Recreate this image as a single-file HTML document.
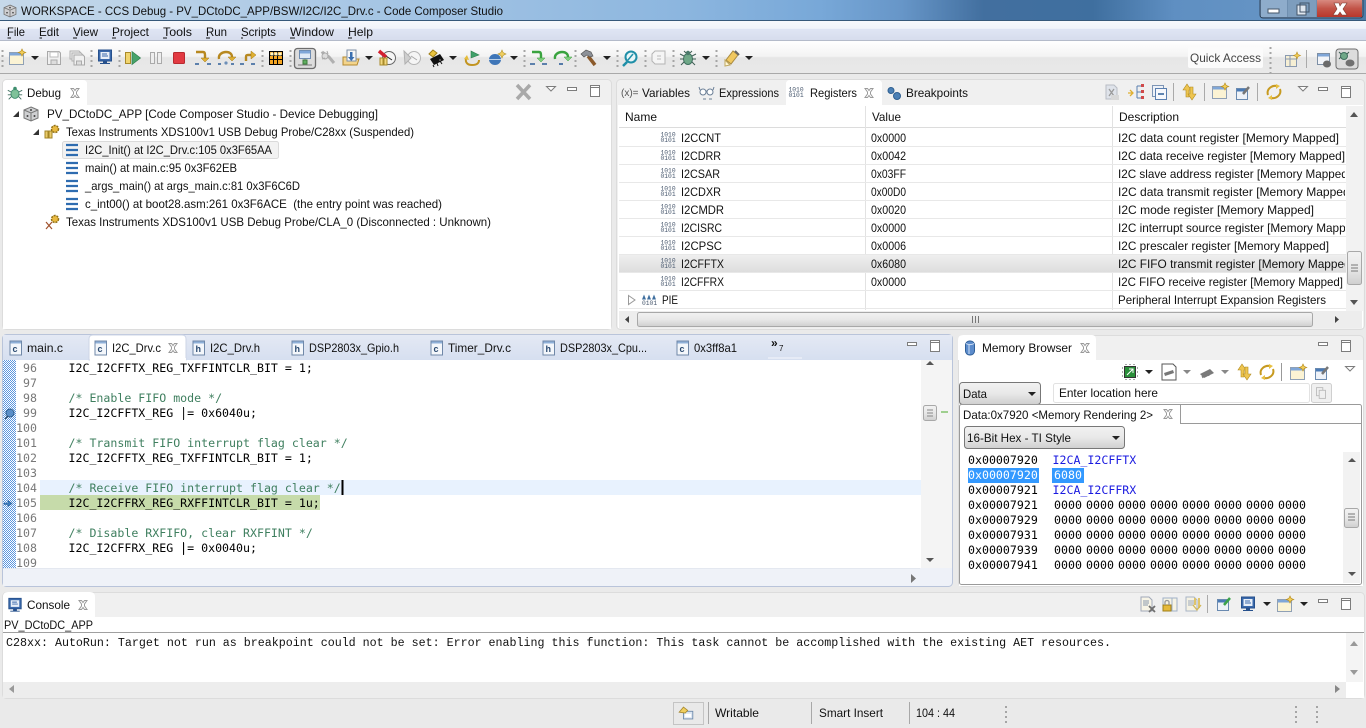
<!DOCTYPE html>
<html><head><meta charset="utf-8"><title>Code Composer Studio</title>
<style>
html,body{margin:0;padding:0;width:1366px;height:728px;overflow:hidden;background:#eaeaea}
svg{display:block}
text{font-family:"Liberation Sans",sans-serif;font-size:12px;fill:#111}
.m{font-family:"DejaVu Sans Mono",monospace;font-size:11.6px;fill:#000}
.c{fill:#3f7f5f}
.n{fill:#787878;text-anchor:end}
.b{fill:#1a1ae0}
.w{fill:#fff}
.k{font-family:"Liberation Mono",monospace;font-size:11.67px}
.bin{font-family:"Liberation Mono",monospace;font-size:6.3px;fill:#46566c}
.fi{font-family:"Liberation Sans",sans-serif;font-size:9px;font-weight:bold;fill:#2a4a70}
</style></head><body>
<svg xmlns="http://www.w3.org/2000/svg" width="1366" height="728" viewBox="0 0 1366 728">
<defs>
<linearGradient id="title" x1="0" x2="1" y1="0" y2="0">
<stop offset="0" stop-color="#c6d9ea"/><stop offset=".2" stop-color="#afcbe6"/><stop offset=".5" stop-color="#8cb6df"/><stop offset=".6" stop-color="#78a8d8"/><stop offset=".66" stop-color="#6796c8"/><stop offset=".72" stop-color="#426f9f"/><stop offset=".8" stop-color="#3f6f9f"/><stop offset=".86" stop-color="#5f8fc2"/><stop offset=".93" stop-color="#6594c4"/><stop offset="1" stop-color="#4d7ca8"/>
</linearGradient>
<linearGradient id="menu" x1="0" x2="0" y1="0" y2="1"><stop offset="0" stop-color="#f6f8fc"/><stop offset=".38" stop-color="#f0f3fa"/><stop offset=".4" stop-color="#dfe5f4"/><stop offset="1" stop-color="#d6dcec"/></linearGradient>
<linearGradient id="tool" x1="0" x2="0" y1="0" y2="1"><stop offset="0" stop-color="#fff"/><stop offset=".48" stop-color="#f3f3f3"/><stop offset=".52" stop-color="#e6e6e6"/><stop offset="1" stop-color="#e9e9e9"/></linearGradient>
<linearGradient id="tabbar" x1="0" x2="0" y1="0" y2="1"><stop offset="0" stop-color="#e4e9f4"/><stop offset="1" stop-color="#d6dff0"/></linearGradient>
<linearGradient id="sel" x1="0" x2="0" y1="0" y2="1"><stop offset="0" stop-color="#efefef"/><stop offset="1" stop-color="#dcdcdc"/></linearGradient>
<linearGradient id="btn" x1="0" x2="0" y1="0" y2="1"><stop offset="0" stop-color="#f2f2f2"/><stop offset=".5" stop-color="#e8e8e8"/><stop offset="1" stop-color="#cfcfcf"/></linearGradient>
<linearGradient id="close" x1="0" x2="0" y1="0" y2="1"><stop offset="0" stop-color="#d88a80"/><stop offset=".5" stop-color="#c25448"/><stop offset="1" stop-color="#b8372c"/></linearGradient>
<pattern id="chk" width="2" height="2" patternUnits="userSpaceOnUse"><rect width="2" height="2" fill="#fff"/><rect width="1" height="1" fill="#5b96df"/><rect x="1" y="1" width="1" height="1" fill="#5b96df"/></pattern>
<clipPath id="descclip"><rect x="1114" y="128" width="231" height="182"/></clipPath>

<g id="drop"><path d="M-4-2H4L0 2Z" fill="#222"/></g>
<g id="dropg"><path d="M-4-2H4L0 2Z" fill="#888"/></g>
<g id="x"><path d="M-4-4.5-1.5-4.5 0-2.5 1.5-4.5 4-4.5 1.5-1 1.5 1 4 4.5 1.5 4.5 0 2.5-1.5 4.5-4 4.5-1.5 1-1.5-1Z" fill="#fff" stroke="#9a9a9a"/></g>
<g id="menuv"><path d="M-4.5-2.5H4.5L0 2Z" fill="#fff" stroke="#7d7d7d"/></g>
<g id="min"><rect x="-4.5" y="-1.5" width="9" height="3" fill="#fff" stroke="#7d7d7d"/></g>
<g id="max"><rect x="-4.5" y="-5.5" width="9" height="11" fill="#fff" stroke="#7d7d7d"/><path d="M-4.5-3.5H4.5" stroke="#7d7d7d"/></g>
<g id="new"><rect x="-7.5" y="-5.5" width="14" height="12" fill="#fbf3d4" stroke="#8fa0b5"/><rect x="-7" y="-5" width="13" height="2.5" fill="#7fa6d8"/><path d="M5-9 6.2-6.5 8.7-5.5 6.2-4.5 5-2 3.8-4.5 1.3-5.5 3.8-6.5Z" fill="#f3cf58" stroke="#b98f20" stroke-width=".7"/></g>
<g id="save"><path d="M-6.5-6.5H5L6.5-5V6.5H-6.5Z" fill="#f0f0f0" stroke="#a8a8a8"/><rect x="-4" y="-6" width="8" height="5" fill="#fff" stroke="#bbb"/><rect x="-3" y="2" width="6" height="4.5" fill="#ddd" stroke="#aaa"/></g>
<g id="saveall"><path d="M-7-7H2L4-5V1H-7Z" fill="#efefef" stroke="#b0b0b0"/><path d="M-5-5H4L6-3V3H-5Z" fill="#efefef" stroke="#b0b0b0"/><path d="M-3-3H6L7.5-1.5V7H-3Z" fill="#f0f0f0" stroke="#a8a8a8"/><rect x="-.5" y="3" width="5" height="4" fill="#ddd" stroke="#aaa"/></g>
<g id="console"><rect x="-6.5" y="-7" width="13" height="11" fill="#3a69ab" stroke="#26508c"/><rect x="-4.5" y="-5" width="9" height="7" fill="#e8eff8"/><path d="M-3-3H2M-3-1H3" stroke="#3a69ab"/><path d="M-2 4H2V6H5V7H-5V6H-2Z" fill="#26508c"/></g>
<g id="resume"><rect x="-7.5" y="-5.5" width="5" height="11" fill="#f1d570" stroke="#a98a2a"/><path d="M-1-6.5 7.5 0-1 6.5Z" fill="#47a36a" stroke="#2f7f4d" stroke-width=".7"/></g>
<g id="suspend"><rect x="-5.5" y="-5.5" width="4" height="11" fill="#eee" stroke="#aaa"/><rect x="1.5" y="-5.5" width="4" height="11" fill="#eee" stroke="#aaa"/></g>
<g id="stop"><rect x="-5.5" y="-5.5" width="11" height="11" rx="1" fill="#e23a42" stroke="#b82a30"/></g>
<g id="into"><path d="M-6-6H1C3-6 3-4 3-3V1" fill="none" stroke="#b7881f" stroke-width="2.4"/><path d="M-1 0H7L3 4Z" fill="#e0b030" stroke="#a07818" stroke-width=".5"/><path d="M-7 6H-3M5 6H9" stroke="#2f5f98" stroke-width="1.6"/></g>
<g id="over"><path d="M-7 1C-8-4-3-6 0-6 4-6 6-4 6-1" fill="none" stroke="#b7881f" stroke-width="2.4"/><path d="M2-1H10L6 3Z" fill="#e0b030" stroke="#a07818" stroke-width=".5"/><path d="M-8 6H-5M5 6H8" stroke="#2f5f98" stroke-width="1.6"/><circle cx="0" cy="5" r="1.6" fill="#6d8fb8"/></g>
<g id="ret"><path d="M-2 3V-1C-2-3-1-3 0-3H4" fill="none" stroke="#b7881f" stroke-width="2.4"/><path d="M3-7 8-3 3 1Z" fill="#e0b030" stroke="#a07818" stroke-width=".5"/><path d="M-8 6H-4M3 6H7" stroke="#2f5f98" stroke-width="1.6"/></g>
<g id="grid"><rect x="-6.5" y="-6.5" width="13" height="13" fill="#f5a623" stroke="#000"/><path d="M-2.5-6.5V6.5M1.500-6.500V6.500M-6.500-2.500H6.500M-6.500 1.500H6.500" stroke="#000"/><rect x="-5.500" y="-5.500" width="3" height="3" fill="#fff7c8"/><rect x="-1.500" y="-5.500" width="3" height="3" fill="#fff7c8"/><rect x="2.500" y="-5.500" width="3" height="3" fill="#fff7c8"/></g>
<g id="pressed"><rect x="-5.500" y="-7.500" width="11" height="8" fill="#dfe9f5" stroke="#6f8db2"/><rect x="-5" y="-7" width="10" height="2.500" fill="#7fa6d8"/><rect x="-2" y="2" width="4" height="4" fill="#5fae5f" stroke="#3c7c3c"/><path d="M0 .500V2M-7 7H7" stroke="#7d7d7d"/></g>
<g id="bugtag"><path d="M-6-6 1-1 6 5" stroke="#b0b0b0" stroke-width="3" fill="none"/><circle cx="-3" cy="-2" r="3" fill="#ddd" stroke="#aaa"/><path d="M-7-6-4-4M-6 1-3 0M-1-7 0-4" stroke="#aaa"/></g>
<g id="loadprog"><path d="M-8 7V-1H-4L-3 1H8L6 7Z" fill="#f3d48c" stroke="#b58a30"/><rect x="-4" y="-8" width="9" height="11" fill="#f7f7f7" stroke="#7d8fa5"/><path d="M-1-6H1.500V-1H3.500L.3 3-3-1H-1Z" fill="#3a6fb0"/></g>
<g id="bpclock"><circle cx="2" cy="0" r="6.500" fill="#f5f5f5" stroke="#666"/><path d="M2 0-1-2M2 0 5 2" stroke="#222"/><path d="M-8-7-1-1" stroke="#d3202f" stroke-width="3.500"/><rect x="-7" y="0" width="3" height="7" fill="#f2d880" stroke="#a88a2a"/><rect x="-3" y="0" width="3" height="7" fill="#f2d880" stroke="#a88a2a"/></g>
<g id="bpclockg"><circle cx="2" cy="0" r="6.500" fill="#f5f5f5" stroke="#b5b5b5"/><path d="M2 0-1-2M2 0 5 2" stroke="#aaa"/><path d="M-8-7-1 0-7 6Z" fill="#cfcfcf" stroke="#b0b0b0"/></g>
<g id="chip"><path d="M-3-8-7-4-3-1 1-5Z" fill="#e9c43f" stroke="#a07f18"/><path d="M-6 1 4-4 8 2-2 7Z" fill="#111"/><path d="M-3 7-2 9M1 5 2 8M4 3 6 6" stroke="#111"/><circle cx="4" cy="2" r="1" fill="#666"/></g>
<g id="restart"><path d="M-2-2V-7L6-3-2 0Z" fill="#3fa06a" stroke="#2f7f4d" stroke-width=".6"/><path d="M-7 0C-8 5-5 7-1 7 3 7 6 6 6 2" fill="none" stroke="#c29420" stroke-width="2"/><path d="M-9 1-6-3-4 2Z" fill="#e5bd3b"/></g>
<g id="ball"><ellipse cx="-1" cy="1.500" rx="6" ry="5.500" fill="#3f76b8"/><path d="M-7 1.500H5" stroke="#bcd2ea"/><path d="M6-8 7.200-5.300 10-4 7.200-2.700 6 0 4.800-2.700 2-4 4.800-5.300Z" fill="#f0cf60" stroke="#b09028" stroke-width=".6"/></g>
<g id="gsi"><path d="M-6-6H1C3-6 3-4 3-3V1" fill="none" stroke="#39a33f" stroke-width="2.400"/><path d="M-1 0H7L3 4Z" fill="#7ed07e" stroke="#3d9e3d" stroke-width=".5"/><path d="M-8 6H-3M4 6H9" stroke="#2f5f98" stroke-width="1.600"/></g>
<g id="gso"><path d="M-7 1C-8-4-3-6 0-6 4-6 6-4 6-1" fill="none" stroke="#39a33f" stroke-width="2.400"/><path d="M2-1H10L6 3Z" fill="#7ed07e" stroke="#3d9e3d" stroke-width=".5"/><path d="M-3 6H1" stroke="#2f5f98" stroke-width="1.600"/></g>
<g id="hammer"><path d="M-1-2 6 7" stroke="#8b5a2b" stroke-width="3.500"/><path d="M-8-4-3-8 2-6 4-2 1-1-2-3-5-1Z" fill="#8d9198" stroke="#555" stroke-width=".7"/></g>
<g id="search"><circle cx="1" cy="-1" r="5.500" fill="#e8f6f8" stroke="#1f8fa8" stroke-width="2"/><path d="M-2 2 3-4" stroke="#1f8fa8" stroke-width="1.500"/><path d="M-3 4-7 8" stroke="#1f8fa8" stroke-width="2.500"/></g>
<g id="tags"><path d="M-6-4-3-7H7V6H-3L-6 3Z" fill="#f5f5f5" stroke="#b4b4b4"/><path d="M-1-2H3M-1 1H3" stroke="#bbb"/></g>
<g id="bug"><ellipse cx="0" cy="1" rx="4.500" ry="5.500" fill="#6fa888" stroke="#3f6f5f"/><circle cx="0" cy="-5" r="2.200" fill="#4a7a6a"/><path d="M-8-4-4-2M8-4 4-2M-8 1H-4M8 1H4M-7 7-4 4M7 7 4 4" stroke="#3f5f55"/><path d="M-4-7-2-5M4-7 2-5" stroke="#3f5f55"/></g>
<g id="flash"><path d="M-6 2 1-7 6-3-1 6Z" fill="#f0c860" stroke="#a88a40"/><path d="M-7 2-2 7-7 8Z" fill="#fff8d8" stroke="#c0a860"/><path d="M3-7 7-3" stroke="#666" stroke-width="2"/></g>
<g id="persp"><rect x="-6.500" y="-4.500" width="11" height="11" fill="#f6efd4" stroke="#8a9ab0"/><path d="M-6-1H4M-2-4V6" stroke="#8a9ab0"/><path d="M5-8 6-5.500 8.500-4.500 6-3.500 5-1 4-3.500 1.500-4.500 4-5.500Z" fill="#f3cf58" stroke="#b98f20" stroke-width=".6"/></g>
<g id="cwin"><rect x="-6.500" y="-6.500" width="12" height="11" fill="#f2f4f8" stroke="#7d8fa5"/><rect x="-6" y="-6" width="11" height="2.500" fill="#7fa6d8"/><ellipse cx="3" cy="4" rx="4" ry="3.500" fill="#6a6a6a"/></g>
<g id="debugp"><circle cx="-3" cy="-3" r="3.500" fill="#6fa888" stroke="#3f6f5f"/><path d="M-8-7-6-5M2-7 0-5M-8 0-6-2" stroke="#3f5f55"/><ellipse cx="3" cy="4" rx="4.500" ry="3.500" fill="#707070"/></g>
<g id="root"><path d="M0-7 7-4V4L0 7-7 4V-4Z" fill="#cfd0d2" stroke="#777"/><path d="M-7-4 0-1 7-4M0-1V7" stroke="#777" fill="none"/><circle cx="-3.500" cy="2" r="1" fill="#444"/><circle cx="3.500" cy="2" r="1" fill="#444"/><circle cx="0" cy="-4" r="1" fill="#444"/></g>
<g id="gear"><rect x="-8" y="-1" width="3" height="7" fill="#eacb6a" stroke="#a38525"/><rect x="-4" y="-1" width="3" height="7" fill="#eacb6a" stroke="#a38525"/><circle cx="2" cy="-3" r="3.500" fill="#e8b941" stroke="#8f6f16" stroke-width="1.500" stroke-dasharray="2 1"/></g>
<g id="gearx"><circle cx="2" cy="-3" r="3.500" fill="#e8b941" stroke="#8f6f16" stroke-width="1.500" stroke-dasharray="2 1"/><path d="M-7 0-1 7M-1 0-7 7" stroke="#a0522d" stroke-width="1.200"/></g>
<g id="stack"><path d="M-6-5H6M-6 0H6M-6 5H6" stroke="#2e6cb0" stroke-width="2.200"/></g>
<g id="debugtab"><ellipse cx="0" cy="1" rx="4.500" ry="5" fill="#7fc29a" stroke="#3f8f6f"/><circle cx="0" cy="-5" r="2" fill="#3f8f6f"/><path d="M-8-3-4-1M8-3 4-1M-8 2H-4M8 2H4M-7 7-4 4M7 7 4 4" stroke="#3f6f5f"/></g>
<g id="bin"><text class="bin" x="-7.500" y="-.5">1010</text><text class="bin" x="-7.500" y="5">0101</text></g>
<g id="glasses"><circle cx="-4" cy="-1" r="3" fill="#fff" stroke="#6b7f96"/><circle cx="3" cy="-1" r="3" fill="#fff" stroke="#6b7f96"/><path d="M-1-2H0M-7-3-8-6M6-3 7-6M-4 6H-1M2 6H5" stroke="#6b7f96"/></g>
<g id="bps"><circle cx="-3" cy="-2.500" r="3" fill="#4a7fb5" stroke="#2f5f90"/><circle cx="3" cy="3" r="3.500" fill="#4a7fb5" stroke="#2f5f90"/></g>
<g id="fc"><rect x="-6" y="-7" width="11.500" height="14" fill="#f4f7fb" stroke="#7088a8"/><rect x="-5.500" y="-6.500" width="10.500" height="2" fill="#8fb0d8"/><text class="fi" x="-3.500" y="4">c</text></g>
<g id="fh"><rect x="-6" y="-7" width="11.500" height="14" fill="#f4f7fb" stroke="#7088a8"/><rect x="-5.500" y="-6.500" width="10.500" height="2" fill="#8fb0d8"/><text class="fi" x="-3.500" y="4">h</text></g>
<g id="cyl"><rect x="-4.500" y="-7" width="9" height="14" rx="4" fill="#5c8ccc" stroke="#2f5f98"/><path d="M-4-4.500C-2-3 2-3 4-4.500M-1 -3V6" stroke="#d0e0f4" fill="none"/></g>
<g id="sync"><path d="M-6 3C-8-3-2-7 3-6" fill="none" stroke="#c79a20" stroke-width="2"/><path d="M6-3C8 3 2 7-3 6" fill="none" stroke="#c79a20" stroke-width="2"/><path d="M2-8 6-6 2-3Z" fill="#e8c040"/><path d="M-2 8-6 6-2 3Z" fill="#e8c040"/></g>
<g id="updown"><path d="M-2-2-5-2-1-8 3-2 1-2V5H-2Z" fill="#eec550" stroke="#b08a20" stroke-width=".6"/><path d="M2 2H0L4 8 8 2 5 2V-5H2Z" fill="#eec550" stroke="#b08a20" stroke-width=".6"/></g>
<g id="pin"><rect x="-6.500" y="-4.500" width="11" height="11" fill="#eef2f8" stroke="#6a8ab0"/><rect x="-6" y="-4" width="10" height="2.500" fill="#4a7ab5"/><path d="M0 1 6-6" stroke="#777" stroke-width="2.500"/></g>
<g id="pingreen"><rect x="-6.500" y="-4.500" width="11" height="11" fill="#eef2f8" stroke="#6a8ab0"/><rect x="-6" y="-4" width="10" height="2.500" fill="#4a7ab5"/><path d="M0 1 6-6" stroke="#3ca34a" stroke-width="2.500"/></g>
<g id="memchip"><rect x="-5.500" y="-5.500" width="11" height="11" fill="#2a8f3a" stroke="#333"/><path d="M-3 3 3-3M-1-3H3V1" stroke="#fff" fill="none"/><path d="M-8-4H8M-8 0H8M-8 4H8M-4-8V8M0-8V8M4-8V8" stroke="#555" stroke-dasharray="1 14"/></g>
<g id="memfile"><path d="M-7-8H4L7-5V8H-7Z" fill="#fff" stroke="#555"/><path d="M-5 1 4-2 5 1-4 4Z" fill="#777"/></g>
<g id="chipg"><path d="M-7 2 3-3 7 1-3 6Z" fill="#7a7a7a"/><path d="M-5 4-4 6M-2 2-1 5M1 1 2 4M4-1 5 2" stroke="#7a7a7a"/></g>
<g id="xlab"><path d="M-6-7H2L5-4V7H-6Z" fill="#dfe3ea" stroke="#b8bcc4"/><path d="M-3-3 2 4M2-3-3 4" stroke="#9a9a9a" stroke-width="1.300"/><rect x="-1" y="3" width="8" height="5" fill="#d8d8d8"/></g>
<g id="linkto"><path d="M-8 1H-3M-6-2-3 1-6 4" stroke="#e0b030" stroke-width="1.300" fill="none"/><path d="M1-6V6M1-6H7M1 0H7M1 6H7" stroke="#5a7fb0" fill="none"/><rect x="5" y="-8" width="3" height="3" fill="#d04a4a"/><rect x="5" y="-2" width="3" height="3" fill="#d04a4a"/><rect x="5" y="4" width="3" height="3" fill="#d04a4a"/></g>
<g id="collapse"><rect x="-6.500" y="-6.500" width="11" height="11" fill="#eef2f8" stroke="#7d95b5"/><rect x="-3.500" y="-3.500" width="11" height="11" fill="#f6f8fc" stroke="#5a7fb0"/><path d="M-1 2H5" stroke="#2f5f98" stroke-width="1.500"/></g>
<g id="docx"><path d="M-6-7H2L5-4V7H-6Z" fill="#f7f4e6" stroke="#a0a8b8"/><path d="M-4-3H2M-4-1H2M-4 1H1" stroke="#8a97ac"/><path d="M2 2 8 8M8 2 2 8" stroke="#6f6f6f" stroke-width="1.800"/></g>
<g id="lock"><rect x="-7" y="-6" width="14" height="13" fill="#f6f3e4" stroke="#9fb0c8"/><path d="M2-6V7" stroke="#9fb0c8"/><rect x="-7" y="1" width="8" height="6" fill="#e5b93a" stroke="#a07f18"/><path d="M-5 1V-2C-5-4-1-4-1-2V1" fill="none" stroke="#999" stroke-width="1.300"/></g>
<g id="docpin"><path d="M-7-7H1L4-4V7H-7Z" fill="#f5f2e4" stroke="#a8b4c6"/><path d="M-5-3H1M-5-1H1M-5 1H1" stroke="#9aa8bc"/><path d="M2-6V1M6-6V4" stroke="#dfc46a" stroke-width="2"/><path d="M0 1 4 6 8 1" stroke="#d4b858" fill="none" stroke-width="1.300"/></g>
<g id="statusic"><rect x="-3" y="-2" width="11" height="9" fill="#dce6f2" stroke="#6a87a8"/><rect x="-1" y="1" width="7" height="4" fill="#fff"/><path d="M-8-1-3-7 2-3-1 0Z" fill="#f0cf60" stroke="#a88a30"/></g>
<g id="copy"><rect x="-5" y="-6" width="7" height="9" fill="#f0f0f0" stroke="#bbb"/><rect x="-2" y="-3" width="7" height="9" fill="#f0f0f0" stroke="#bbb"/></g>
</defs>

<!-- window base -->
<rect width="1366" height="728" fill="#eaeaea"/>
<!-- title bar -->
<rect width="1366" height="21" fill="url(#title)"/>
<rect y="20" width="1366" height="1" fill="#35587a"/>
<use href="#root" transform="translate(10 11) scale(.85)"/>
<text x="21" y="15" textLength="482" lengthAdjust="spacingAndGlyphs">WORKSPACE - CCS Debug - PV_DCtoDC_APP/BSW/I2C/I2C_Drv.c - Code Composer Studio</text>
<rect x="1260" y="-2" width="103" height="20" rx="3" fill="#6f8fb0" stroke="#2f4258"/>
<rect x="1261" y="0" width="26" height="17" fill="#8eaccb"/><rect x="1288" y="0" width="28" height="17" fill="#7d9dbd"/>
<rect x="1317" y="0" width="45" height="17" fill="url(#close)"/>
<rect x="1268" y="9" width="11" height="4" fill="#fff" stroke="#44566a"/>
<rect x="1297" y="5" width="9" height="10" fill="#dfe7ef" stroke="#44566a"/><rect x="1300" y="3" width="9" height="9" fill="none" stroke="#44566a"/>
<path d="M1334 3H1339L1340 6 1342 3H1347L1343 9 1347 15H1342L1340 12 1338 15H1333L1337 9Z" fill="#fff" stroke="#7a3a30" stroke-width=".6"/>

<!-- menu bar -->
<rect y="21" width="1366" height="20" fill="url(#menu)"/>
<rect y="40" width="1366" height="1" fill="#b4bbca"/>
<text x="7" y="36" textLength="18" lengthAdjust="spacingAndGlyphs">File</text>
<text x="39" y="36" textLength="20" lengthAdjust="spacingAndGlyphs">Edit</text>
<text x="73" y="36" textLength="25" lengthAdjust="spacingAndGlyphs">View</text>
<text x="112" y="36" textLength="37" lengthAdjust="spacingAndGlyphs">Project</text>
<text x="163" y="36" textLength="29" lengthAdjust="spacingAndGlyphs">Tools</text>
<text x="206" y="36" textLength="21" lengthAdjust="spacingAndGlyphs">Run</text>
<text x="241" y="36" textLength="35" lengthAdjust="spacingAndGlyphs">Scripts</text>
<text x="290" y="36" textLength="44" lengthAdjust="spacingAndGlyphs">Window</text>
<text x="348" y="36" textLength="25" lengthAdjust="spacingAndGlyphs">Help</text>
<path d="M7.500 38H11M39.500 38H42M73 38H77M112 38H116M163 38H167M206 38H210M241 38H243M290 38H295M348 38H352" stroke="#111"/>

<!-- toolbar -->
<rect y="41" width="1366" height="32" fill="url(#tool)"/>
<rect y="73" width="1366" height="1" fill="#a9a9a9"/>
<path d="M2.500 50V70M91.500 50V70M119.500 50V70M262.500 50V70M290.500 50V70M524.500 50V70M575.500 50V70M617.500 50V70M645.500 50V70M673.500 50V70M716.500 50V70M1270.500 47V73" stroke="#a5a5a5" stroke-width="2" stroke-dasharray="2 3"/>
<use href="#new" x="17" y="58"/><use href="#drop" x="35" y="58"/>
<use href="#save" x="54" y="58"/><use href="#saveall" x="77" y="58"/>
<use href="#console" x="105" y="57"/>
<use href="#resume" x="133" y="58"/><use href="#suspend" x="156" y="58"/><use href="#stop" x="179" y="58"/>
<use href="#into" x="202" y="58"/><use href="#over" x="226" y="58"/><use href="#ret" x="248" y="58"/>
<use href="#grid" x="276" y="58"/>
<rect x="294.500" y="48.500" width="21" height="20" rx="3" fill="#dcdcdc" stroke="#6d6d6d" stroke-width="1.300"/>
<use href="#pressed" x="305" y="58"/>
<use href="#bugtag" x="328" y="58"/>
<use href="#loadprog" x="351" y="58"/><use href="#drop" x="369" y="58"/>
<use href="#bpclock" x="387" y="58"/><use href="#bpclockg" x="412" y="58"/>
<use href="#chip" x="436" y="58"/><use href="#drop" x="453" y="58"/>
<use href="#restart" x="473" y="58"/>
<use href="#ball" x="496" y="58"/><use href="#drop" x="514" y="58"/>
<use href="#gsi" x="538" y="58"/><use href="#gso" x="562" y="58"/>
<use href="#hammer" x="589" y="58"/><use href="#drop" x="607" y="58"/>
<use href="#search" x="630" y="58"/>
<use href="#tags" x="658" y="58"/>
<use href="#bug" x="688" y="58"/><use href="#drop" x="706" y="58"/>
<use href="#flash" x="732" y="58"/><use href="#drop" x="749" y="58"/>
<rect x="1188" y="47" width="75" height="21" rx="2" fill="#fbfbfb"/>
<text x="1190" y="62" textLength="71" lengthAdjust="spacingAndGlyphs" style="fill:#444">Quick Access</text>
<use href="#persp" x="1292" y="60"/>
<path d="M1306.500 50V68" stroke="#aaa"/>
<use href="#cwin" x="1324" y="60"/>
<rect x="1336" y="49" width="22" height="20" rx="3" fill="#dcdcdc" stroke="#6d6d6d"/>
<use href="#debugp" x="1347" y="59"/>

<!-- DEBUG PANEL -->
<rect x="2.500" y="79.500" width="609" height="250" rx="4" fill="#f0f0f0" stroke="#dcdcdc"/>
<rect x="3" y="105" width="608" height="224" fill="#fff"/>
<path d="M3 105V84Q3 80 7 80H83Q87 80 87 84V105Z" fill="#fff"/>
<use href="#debugtab" transform="translate(15 93) scale(.9)"/>
<text x="27" y="97" textLength="34" lengthAdjust="spacingAndGlyphs">Debug</text>
<use href="#x" x="75" y="93"/>
<path d="M517 85 530 99M530 85 517 99" stroke="#a9a9a9" stroke-width="3.500"/>
<use href="#menuv" x="551" y="89"/><use href="#min" x="572" y="89"/><use href="#max" x="595" y="91"/>

<path d="M13 117 19 111V117Z" fill="#333"/>
<use href="#root" x="31" y="114"/>
<text x="47" y="118" textLength="331" lengthAdjust="spacingAndGlyphs">PV_DCtoDC_APP [Code Composer Studio - Device Debugging]</text>
<path d="M33 135 39 129V135Z" fill="#333"/>
<use href="#gear" x="53" y="132"/>
<text x="66" y="136" textLength="348" lengthAdjust="spacingAndGlyphs">Texas Instruments XDS100v1 USB Debug Probe/C28xx (Suspended)</text>
<rect x="62.500" y="141.500" width="216" height="17" rx="2" fill="#f2f2f2" stroke="#dadada"/>
<use href="#stack" x="72" y="150"/>
<text x="85" y="154" textLength="187" lengthAdjust="spacingAndGlyphs">I2C_Init() at I2C_Drv.c:105 0x3F65AA</text>
<use href="#stack" x="72" y="168"/>
<text x="85" y="172" textLength="152" lengthAdjust="spacingAndGlyphs">main() at main.c:95 0x3F62EB</text>
<use href="#stack" x="72" y="186"/>
<text x="85" y="190" textLength="215" lengthAdjust="spacingAndGlyphs">_args_main() at args_main.c:81 0x3F6C6D</text>
<use href="#stack" x="72" y="204"/>
<text x="85" y="208" textLength="357" lengthAdjust="spacingAndGlyphs" xml:space="preserve">c_int00() at boot28.asm:261 0x3F6ACE  (the entry point was reached)</text>
<use href="#gearx" x="53" y="222"/>
<text x="66" y="226" textLength="425" lengthAdjust="spacingAndGlyphs">Texas Instruments XDS100v1 USB Debug Probe/CLA_0 (Disconnected : Unknown)</text>

<!-- REGISTERS PANEL -->
<rect x="616.500" y="79.500" width="748" height="250" rx="4" fill="#f0f0f0" stroke="#dcdcdc"/>
<rect x="618" y="105" width="745" height="223" fill="#fff"/>
<path d="M786 105V84Q786 80 790 80H878Q882 80 882 84V105Z" fill="#fff"/>
<text x="621" y="96" style="font-size:10px;fill:#555">(x)=</text>
<text x="642" y="97" textLength="48" lengthAdjust="spacingAndGlyphs">Variables</text>
<use href="#glasses" x="707" y="93"/>
<text x="719" y="97" textLength="60" lengthAdjust="spacingAndGlyphs">Expressions</text>
<use href="#bin" x="796" y="92"/>
<text x="810" y="97" textLength="47" lengthAdjust="spacingAndGlyphs">Registers</text>
<use href="#x" x="869" y="93"/>
<use href="#bps" x="894" y="93"/>
<text x="906" y="97" textLength="62" lengthAdjust="spacingAndGlyphs">Breakpoints</text>
<use href="#xlab" x="1112" y="92"/><use href="#linkto" x="1136" y="92"/><use href="#collapse" x="1159" y="92"/>
<path d="M1173.500 83V101M1204.500 83V101M1257.500 83V101" stroke="#aaa"/>
<use href="#updown" x="1188" y="92"/><use href="#new" x="1220" y="92"/><use href="#pin" x="1243" y="93"/><use href="#sync" x="1274" y="92"/>
<use href="#menuv" x="1303" y="89"/><use href="#min" x="1323" y="89"/><use href="#max" x="1346" y="92"/>

<rect x="619" y="106" width="727" height="21" fill="#fff"/>
<path d="M619 127.500H1346" stroke="#dcdcdc"/>
<path d="M865.500 106V310M1112.500 106V310" stroke="#e2e2e2"/>
<text x="625" y="121" textLength="32" lengthAdjust="spacingAndGlyphs">Name</text>
<text x="872" y="121" textLength="29" lengthAdjust="spacingAndGlyphs">Value</text>
<text x="1119" y="121" textLength="60" lengthAdjust="spacingAndGlyphs">Description</text>

<rect x="619" y="255" width="727" height="18" fill="url(#sel)"/>
<path d="M619 146.500H1346M619 164.500H1346M619 182.500H1346M619 200.500H1346M619 218.500H1346M619 236.500H1346M619 254.500H1346M619 272.500H1346M619 290.500H1346M619 308.500H1346" stroke="#e8e8e8"/>
<use href="#bin" x="668" y="137"/><use href="#bin" x="668" y="155"/><use href="#bin" x="668" y="173"/><use href="#bin" x="668" y="191"/><use href="#bin" x="668" y="209"/><use href="#bin" x="668" y="227"/><use href="#bin" x="668" y="245"/><use href="#bin" x="668" y="263"/><use href="#bin" x="668" y="281"/>
<text x="681" y="142" textLength="40" lengthAdjust="spacingAndGlyphs">I2CCNT</text>
<text x="681" y="160" textLength="40" lengthAdjust="spacingAndGlyphs">I2CDRR</text>
<text x="681" y="178" textLength="39" lengthAdjust="spacingAndGlyphs">I2CSAR</text>
<text x="681" y="196" textLength="40" lengthAdjust="spacingAndGlyphs">I2CDXR</text>
<text x="681" y="214" textLength="43" lengthAdjust="spacingAndGlyphs">I2CMDR</text>
<text x="681" y="232" textLength="41" lengthAdjust="spacingAndGlyphs">I2CISRC</text>
<text x="681" y="250" textLength="41" lengthAdjust="spacingAndGlyphs">I2CPSC</text>
<text x="681" y="268" textLength="43" lengthAdjust="spacingAndGlyphs">I2CFFTX</text>
<text x="681" y="286" textLength="43" lengthAdjust="spacingAndGlyphs">I2CFFRX</text>
<path d="M628.500 295.500 635 300 628.500 304.500Z" fill="#fff" stroke="#999"/>
<g transform="translate(649 300)"><text class="bin" x="-7" y="5">0101</text><path d="M-7-.500-5-5.500-3-.500ZM-2-.500 0-5.500 2-.500ZM3-.500 5-5.500 7-.500Z" fill="#3f6f9f"/></g>
<text x="662" y="304" textLength="16" lengthAdjust="spacingAndGlyphs">PIE</text>
<text x="871" y="142" textLength="35" lengthAdjust="spacingAndGlyphs">0x0000</text>
<text x="871" y="160" textLength="35" lengthAdjust="spacingAndGlyphs">0x0042</text>
<text x="871" y="178" textLength="35" lengthAdjust="spacingAndGlyphs">0x03FF</text>
<text x="871" y="196" textLength="35" lengthAdjust="spacingAndGlyphs">0x00D0</text>
<text x="871" y="214" textLength="35" lengthAdjust="spacingAndGlyphs">0x0020</text>
<text x="871" y="232" textLength="35" lengthAdjust="spacingAndGlyphs">0x0000</text>
<text x="871" y="250" textLength="35" lengthAdjust="spacingAndGlyphs">0x0006</text>
<text x="871" y="268" textLength="35" lengthAdjust="spacingAndGlyphs">0x6080</text>
<text x="871" y="286" textLength="35" lengthAdjust="spacingAndGlyphs">0x0000</text>
<g clip-path="url(#descclip)">
<text x="1118" y="142" textLength="221" lengthAdjust="spacingAndGlyphs">I2C data count register [Memory Mapped]</text>
<text x="1118" y="160" textLength="227" lengthAdjust="spacingAndGlyphs">I2C data receive register [Memory Mapped]</text>
<text x="1118" y="178" textLength="233" lengthAdjust="spacingAndGlyphs">I2C slave address register [Memory Mapped]</text>
<text x="1118" y="196" textLength="235" lengthAdjust="spacingAndGlyphs">I2C data transmit register [Memory Mapped]</text>
<text x="1118" y="214" textLength="196" lengthAdjust="spacingAndGlyphs">I2C mode register [Memory Mapped]</text>
<text x="1118" y="232" textLength="244" lengthAdjust="spacingAndGlyphs">I2C interrupt source register [Memory Mapped]</text>
<text x="1118" y="250" textLength="211" lengthAdjust="spacingAndGlyphs">I2C prescaler register [Memory Mapped]</text>
<text x="1118" y="268" textLength="236" lengthAdjust="spacingAndGlyphs">I2C FIFO transmit register [Memory Mapped]</text>
<text x="1118" y="286" textLength="225" lengthAdjust="spacingAndGlyphs">I2C FIFO receive register [Memory Mapped]</text>
<text x="1118" y="304" textLength="208" lengthAdjust="spacingAndGlyphs">Peripheral Interrupt Expansion Registers</text>
</g>
<!-- reg scrollbars -->
<rect x="1346" y="106" width="17" height="205" fill="#f2f2f2"/>
<path d="M1350 117 1354 112 1358 117Z" fill="#555"/><path d="M1350 300 1358 300 1354 305Z" fill="#555"/>
<rect x="1347.500" y="251.500" width="14" height="33" rx="2" fill="url(#btn)" stroke="#a8a8a8"/>
<path d="M1351 265H1358M1351 268H1358M1351 271H1358" stroke="#777"/>
<rect x="619" y="311" width="743" height="17" fill="#ededed"/>
<path d="M629 316V323L625 319.500Z" fill="#444"/><path d="M1335 316V323L1339 319.500Z" fill="#444"/>
<rect x="637.500" y="312.500" width="675" height="14" rx="2" fill="url(#btn)" stroke="#a8a8a8"/>
<path d="M972.500 316V323M975.500 316V323M978.500 316V323" stroke="#777"/>

<!-- EDITOR PANEL -->
<rect x="2.500" y="334.500" width="950" height="252" rx="4" fill="#eef1f8" stroke="#b9c4da"/>
<rect x="3" y="335" width="949" height="25" fill="url(#tabbar)"/>
<rect x="3" y="360" width="935" height="208" fill="#fff"/>
<rect x="938" y="360" width="14" height="208" fill="#f4f4f4"/>
<path d="M89 360V339Q89 335 93 335H182Q186 335 186 339V360Z" fill="#fff" stroke="#cdd5e6"/>
<rect x="90" y="358" width="96" height="3" fill="#fff"/>
<use href="#fc" x="16" y="348"/><text x="27" y="352" textLength="36" lengthAdjust="spacingAndGlyphs">main.c</text>
<use href="#fc" x="101" y="348"/><text x="112" y="352" textLength="49" lengthAdjust="spacingAndGlyphs">I2C_Drv.c</text>
<use href="#x" x="173" y="348"/>
<use href="#fh" x="199" y="348"/><text x="210" y="352" textLength="50" lengthAdjust="spacingAndGlyphs">I2C_Drv.h</text>
<use href="#fh" x="298" y="348"/><text x="309" y="352" textLength="90" lengthAdjust="spacingAndGlyphs">DSP2803x_Gpio.h</text>
<use href="#fc" x="437" y="348"/><text x="448" y="352" textLength="63" lengthAdjust="spacingAndGlyphs">Timer_Drv.c</text>
<use href="#fh" x="549" y="348"/><text x="560" y="352" textLength="87" lengthAdjust="spacingAndGlyphs">DSP2803x_Cpu...</text>
<use href="#fc" x="683" y="348"/><text x="694" y="352" textLength="43" lengthAdjust="spacingAndGlyphs">0x3ff8a1</text>
<text x="771" y="347" style="font-size:12px;font-weight:bold">»</text><text x="779" y="351" style="font-size:8px">7</text>
<path d="M768 358H802" stroke="#f4f6fb"/>
<use href="#min" x="912" y="344"/><use href="#max" x="935" y="346"/>

<rect x="3" y="360" width="13" height="210" fill="url(#chk)"/>
<rect x="40" y="480" width="881" height="15" fill="#e8f2fe"/>
<rect x="40" y="495" width="280" height="15" fill="#c6dbaa"/>
<rect x="341.500" y="480" width="2" height="15" fill="#000"/>
<g class="ln">
<text class="m n" x="37" y="372">96</text><text class="m n" x="37" y="387">97</text><text class="m n" x="37" y="402">98</text><text class="m n" x="37" y="417">99</text><text class="m n" x="37" y="432">100</text><text class="m n" x="37" y="447">101</text><text class="m n" x="37" y="462">102</text><text class="m n" x="37" y="477">103</text><text class="m n" x="37" y="492">104</text><text class="m n" x="37" y="507">105</text><text class="m n" x="37" y="522">106</text><text class="m n" x="37" y="537">107</text><text class="m n" x="37" y="552">108</text><text class="m n" x="37" y="567">109</text>
</g>
<text class="m" x="68.500" y="372" xml:space="preserve">I2C_I2CFFTX_REG_TXFFINTCLR_BIT = 1;</text>
<text class="m c" x="68.500" y="402">/* Enable FIFO mode */</text>
<text class="m" x="68.500" y="417" xml:space="preserve">I2C_I2CFFTX_REG |= 0x6040u;</text>
<path d="M183.500 407V420M183.500 542V555" stroke="#222"/>
<text class="m c" x="68.500" y="447">/* Transmit FIFO interrupt flag clear */</text>
<text class="m" x="68.500" y="462" xml:space="preserve">I2C_I2CFFTX_REG_TXFFINTCLR_BIT = 1;</text>
<text class="m c" x="68.500" y="492">/* Receive FIFO interrupt flag clear */</text>
<text class="m" x="68.500" y="507" xml:space="preserve">I2C_I2CFFRX_REG_RXFFINTCLR_BIT = 1u;</text>
<text class="m c" x="68.500" y="537">/* Disable RXFIFO, clear RXFFINT */</text>
<text class="m" x="68.500" y="552" xml:space="preserve">I2C_I2CFFRX_REG |= 0x0040u;</text>
<circle cx="10" cy="413" r="4" fill="#5b8fc8" stroke="#2f5f90"/><path d="M5 419 8 416" stroke="#2f4f70" stroke-width="1.500"/>
<path d="M4 503H8V500.500L12 503.500 8 506.500V504.500H4Z" fill="#3f7fc0" stroke="#2a5f98" stroke-width=".6"/>
<!-- editor scrollbars -->
<rect x="921" y="360" width="17" height="208" fill="#f4f4f4"/>
<path d="M926 365 930 361 934 365Z" fill="#555"/><path d="M926 558 934 558 930 562Z" fill="#555"/>
<rect x="923.500" y="405.500" width="13" height="15" rx="2" fill="url(#btn)" stroke="#a8a8a8"/>
<path d="M927 410H933M927 413H933M927 416H933" stroke="#888"/>
<rect x="941" y="411" width="7" height="2" fill="#9fcf8f"/>
<rect x="3" y="568" width="917" height="18" fill="#eff2f8"/>
<rect x="3" y="568" width="917" height="1" fill="#e4e8f0"/>
<path d="M911 574V583L916 578.500Z" fill="#777"/>

<!-- MEMORY PANEL -->
<rect x="958.500" y="335.500" width="405" height="251" rx="4" fill="#f0f0f0" stroke="#dcdcdc"/>
<rect x="959" y="360" width="404" height="226" fill="#fff"/>
<path d="M958 360V340Q958 335 963 335H1092Q1096 335 1096 340V360Z" fill="#fff"/>
<use href="#cyl" x="970" y="348"/>
<text x="982" y="352" textLength="90" lengthAdjust="spacingAndGlyphs">Memory Browser</text>
<use href="#x" x="1085" y="348"/>
<use href="#min" x="1323" y="344"/><use href="#max" x="1346" y="346"/>
<use href="#memchip" x="1130" y="372"/><use href="#drop" x="1149" y="372"/>
<use href="#memfile" x="1169" y="372"/><use href="#dropg" x="1187" y="372"/>
<use href="#chipg" x="1207" y="372"/><use href="#dropg" x="1225" y="372"/>
<use href="#updown" x="1243" y="372"/><use href="#sync" x="1267" y="372"/>
<path d="M1281.500 363V381" stroke="#999"/>
<use href="#new" x="1298" y="373"/><use href="#pin" x="1322" y="373"/><use href="#menuv" x="1350" y="369"/>
<rect x="959.500" y="382.500" width="81" height="22" rx="3" fill="url(#btn)" stroke="#777"/>
<text x="963" y="398" textLength="24" lengthAdjust="spacingAndGlyphs">Data</text>
<use href="#drop" x="1032" y="394"/>
<rect x="1053.500" y="383.500" width="256" height="19" rx="2" fill="#fff" stroke="#e2e2e2"/>
<text x="1059" y="397" textLength="99" lengthAdjust="spacingAndGlyphs">Enter location here</text>
<rect x="1311.500" y="383.500" width="20" height="19" rx="2" fill="#f0f0f0" stroke="#cfcfcf"/>
<use href="#copy" transform="translate(1321 393) scale(.9)"/>
<!-- inner folder -->
<rect x="959.500" y="404.500" width="402" height="180" rx="2" fill="#fff" stroke="#9a9a9a"/>
<path d="M1180.500 405V423.500H1361" fill="none" stroke="#9a9a9a"/>
<text x="963" y="419" textLength="190" lengthAdjust="spacingAndGlyphs">Data:0x7920 &lt;Memory Rendering 2&gt;</text>
<use href="#x" x="1168" y="414"/>
<rect x="964.500" y="426.500" width="160" height="22" rx="3" fill="url(#btn)" stroke="#777"/>
<text x="967" y="442" textLength="104" lengthAdjust="spacingAndGlyphs">16-Bit Hex - TI Style</text>
<use href="#drop" x="1116" y="438"/>
<rect x="968" y="468" width="71" height="15" fill="#3399ff"/>
<rect x="1052" y="468" width="32" height="15" fill="#3399ff"/>
<text class="m" x="968" y="464">0x00007920</text><text class="m b" x="1052.500" y="464">I2CA_I2CFFTX</text>
<text class="m w" x="968" y="479">0x00007920</text><text class="m w" x="1054" y="479">6080</text>
<text class="m" x="968" y="494">0x00007921</text><text class="m b" x="1052.500" y="494">I2CA_I2CFFRX</text>
<text class="m" y="509"><tspan x="968">0x00007921</tspan><tspan x="1054">0000</tspan><tspan x="1086">0000</tspan><tspan x="1118">0000</tspan><tspan x="1150">0000</tspan><tspan x="1182">0000</tspan><tspan x="1214">0000</tspan><tspan x="1246">0000</tspan><tspan x="1278">0000</tspan></text>
<text class="m" y="524"><tspan x="968">0x00007929</tspan><tspan x="1054">0000</tspan><tspan x="1086">0000</tspan><tspan x="1118">0000</tspan><tspan x="1150">0000</tspan><tspan x="1182">0000</tspan><tspan x="1214">0000</tspan><tspan x="1246">0000</tspan><tspan x="1278">0000</tspan></text>
<text class="m" y="539"><tspan x="968">0x00007931</tspan><tspan x="1054">0000</tspan><tspan x="1086">0000</tspan><tspan x="1118">0000</tspan><tspan x="1150">0000</tspan><tspan x="1182">0000</tspan><tspan x="1214">0000</tspan><tspan x="1246">0000</tspan><tspan x="1278">0000</tspan></text>
<text class="m" y="554"><tspan x="968">0x00007939</tspan><tspan x="1054">0000</tspan><tspan x="1086">0000</tspan><tspan x="1118">0000</tspan><tspan x="1150">0000</tspan><tspan x="1182">0000</tspan><tspan x="1214">0000</tspan><tspan x="1246">0000</tspan><tspan x="1278">0000</tspan></text>
<text class="m" y="569"><tspan x="968">0x00007941</tspan><tspan x="1054">0000</tspan><tspan x="1086">0000</tspan><tspan x="1118">0000</tspan><tspan x="1150">0000</tspan><tspan x="1182">0000</tspan><tspan x="1214">0000</tspan><tspan x="1246">0000</tspan><tspan x="1278">0000</tspan></text>
<rect x="1343" y="452" width="17" height="131" fill="#f2f2f2"/>
<path d="M1348 462 1352 458 1356 462Z" fill="#555"/><path d="M1348 572 1356 572 1352 576Z" fill="#555"/>
<rect x="1344.500" y="508.500" width="14" height="19" rx="2" fill="url(#btn)" stroke="#a8a8a8"/>
<path d="M1348 514H1355M1348 517H1355M1348 520H1355" stroke="#777"/>

<!-- CONSOLE PANEL -->
<rect x="2.500" y="592.500" width="1362" height="106" rx="4" fill="#f0f0f0" stroke="#dcdcdc"/>
<rect x="3" y="617" width="1361" height="81" fill="#fff"/>
<path d="M3 617V597Q3 592 8 592H90Q95 592 95 597V617Z" fill="#fff"/>
<use href="#console" transform="translate(15 605) scale(.95)"/>
<text x="27" y="609" textLength="43" lengthAdjust="spacingAndGlyphs">Console</text>
<use href="#x" x="83" y="605"/>
<use href="#docx" x="1147" y="604"/><use href="#lock" x="1170" y="604"/><use href="#docpin" x="1193" y="604"/>
<path d="M1207.500 595V613" stroke="#aaa"/>
<use href="#pingreen" x="1224" y="604"/><use href="#console" x="1248" y="604"/><use href="#drop" x="1267" y="604"/>
<use href="#new" x="1285" y="605"/><use href="#drop" x="1304" y="604"/>
<use href="#min" x="1323" y="601"/><use href="#max" x="1346" y="604"/>
<text x="4" y="629" textLength="89" lengthAdjust="spacingAndGlyphs">PV_DCtoDC_APP</text>
<rect x="3" y="632" width="1361" height="1" fill="#a0a0a0"/>
<text class="k" x="6" y="646" textLength="1105" lengthAdjust="spacingAndGlyphs">C28xx: AutoRun: Target not run as breakpoint could not be set: Error enabling this function: This task cannot be accomplished with the existing AET resources.</text>
<rect x="1346" y="633" width="17" height="49" fill="#f4f4f4"/>
<path d="M1350 646 1354 641 1358 646Z" fill="#999"/><path d="M1350 670 1358 670 1354 675Z" fill="#999"/>
<rect x="3" y="682" width="1343" height="16" fill="#ededed"/>
<path d="M14 685V693L9 689Z" fill="#999"/><path d="M1335 685V693L1340 689Z" fill="#888"/>

<!-- STATUS BAR -->
<rect x="673.500" y="702.500" width="30" height="22" fill="#e9e9e9" stroke="#c4c4c4"/>
<use href="#statusic" transform="translate(686 713) scale(.85)"/>
<path d="M708.500 702V724M811.500 702V724M909.500 702V724" stroke="#a8a8a8"/>
<text x="715" y="717" textLength="44" lengthAdjust="spacingAndGlyphs">Writable</text>
<text x="819" y="717" textLength="64" lengthAdjust="spacingAndGlyphs">Smart Insert</text>
<text x="916" y="717" textLength="39" lengthAdjust="spacingAndGlyphs">104 : 44</text>
<path d="M1006 706V724M1296 706V724M1317 706V724" stroke="#a5a5a5" stroke-width="2" stroke-dasharray="2 3"/>
</svg>
</body></html>
